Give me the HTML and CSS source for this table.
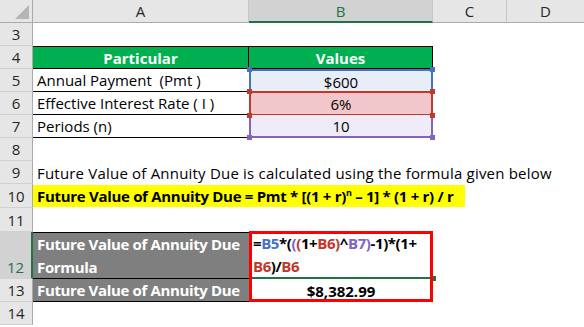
FILE: index.html
```html
<!DOCTYPE html>
<html>
<head>
<meta charset="utf-8">
<link rel="stylesheet" href="styles.css">
</head>
<body>
<div class="sheet">
  <div class="corner"><span class="tri"></span></div>
  <div class="colhead">A</div>
  <div class="colhead sel">B</div>
  <div class="colhead">C</div>
  <div class="colhead last">D</div>

  <div class="rowhead">3</div><div class="cell"></div><div class="cell"></div><div class="cell"></div><div class="cell"></div>

  <div class="rowhead">4</div>
  <div class="cell hdr hdr-a">Particular</div>
  <div class="cell hdr hdr-b">Values</div>
  <div class="cell"></div><div class="cell"></div>

  <div class="rowhead">5</div>
  <div class="cell lbl">Annual Payment&nbsp; (Pmt )</div>
  <div class="cell val ref-blue">$600<i class="sq tl"></i><i class="sq tr"></i></div>
  <div class="cell"></div><div class="cell"></div>

  <div class="rowhead">6</div>
  <div class="cell lbl">Effective Interest Rate ( I )</div>
  <div class="cell val ref-red">6%<i class="sq tl"></i><i class="sq tr"></i><i class="sq bl"></i><i class="sq br"></i></div>
  <div class="cell"></div><div class="cell"></div>

  <div class="rowhead">7</div>
  <div class="cell lbl">Periods (n)</div>
  <div class="cell val ref-purple">10<i class="sq bl"></i><i class="sq br"></i></div>
  <div class="cell"></div><div class="cell"></div>

  <div class="rowhead">8</div><div class="cell"></div><div class="cell"></div><div class="cell"></div><div class="cell"></div>

  <div class="rowhead">9</div>
  <div class="cell span4 text">Future Value of Annuity Due is calculated using the formula given below</div>

  <div class="rowhead">10</div>
  <div class="cell span4"><span class="yellow">Future Value of Annuity Due = Pmt * [(1 + r)<sup>n</sup> – 1] * (1 + r) / r</span></div>

  <div class="rowhead">11</div><div class="cell"></div><div class="cell"></div><div class="cell"></div><div class="cell"></div>

  <div class="rowhead selrow">12</div>
  <div class="cell dark dark-top">Future Value of Annuity Due<br>Formula</div>
  <div class="cell formula"><span class="k">=</span><span class="b">B5</span>*(<span class="p">(</span><span class="r">(</span>1+<span class="r">B6</span><span class="r">)</span>^<span class="p">B7</span><span class="p">)</span>-1)*(1+<br><span class="r">B6</span>)/<span class="r">B6</span><i class="handle"></i></div>
  <div class="cell"></div><div class="cell"></div>

  <div class="rowhead">13</div>
  <div class="cell dark">Future Value of Annuity Due</div>
  <div class="cell result">$8,382.99</div>
  <div class="cell"></div><div class="cell"></div>

  <div class="rowhead">14</div><div class="cell"></div><div class="cell"></div><div class="cell"></div><div class="cell"></div>

  <div class="redbox"></div>
</div>
</body>
</html>
```

FILE: styles.css
```css
html, body {
  margin: 0;
  padding: 0;
  background: #ffffff;
}

.sheet {
  position: relative;
  display: grid;
  grid-template-columns: 33px 216px 184px 74px 77px;
  grid-template-rows: 23px repeat(7, 23px) 24px 24px 47px 23px 23px 23px;
  font-family: "Open Sans", "Lato", sans-serif;
  font-size: 15px;
  color: #000;
  width: 584px;
  height: 327px;
  overflow: hidden;
}

.corner {
  position: relative;
  background: #e6e6e6;
  border-right: 1px solid #ababab;
  border-bottom: 1px solid #ababab;
  box-sizing: border-box;
}
.tri {
  position: absolute;
  right: 3px;
  bottom: 3px;
  width: 0;
  height: 0;
  border-left: 14px solid transparent;
  border-bottom: 14px solid #b5b5b5;
}

.colhead {
  background: #e6e6e6;
  border-right: 1px solid #c6c6c6;
  border-bottom: 1px solid #ababab;
  box-sizing: border-box;
  display: flex;
  align-items: center;
  justify-content: center;
  color: #262626;
  font-size: 15px;
}
.colhead.sel {
  background: #d2d2d2;
  border-bottom: 2px solid #217346;
  color: #217346;
}
.colhead.last { border-right: none; }

.rowhead {
  background: #e6e6e6;
  border-right: 1px solid #ababab;
  border-bottom: 1px solid #d0d0d0;
  box-sizing: border-box;
  display: flex;
  align-items: flex-end;
  justify-content: center;
  padding-bottom: 1px;
  color: #262626;
}
.rowhead.selrow {
  background: #d2d2d2;
  color: #217346;
  border-right: 2px solid #217346;
}

.cell {
  box-sizing: border-box;
  display: flex;
  align-items: center;
  padding: 0 4px;
  white-space: nowrap;
}
.span4 { grid-column: span 4; }

.hdr {
  background: #00b050;
  color: #fff;
  font-weight: bold;
  justify-content: center;
  border-top: 1px solid #000;
  border-bottom: 1px solid #000;
}
.hdr-a { border-right: 1px solid #000; }
.hdr-b { border-right: 1px solid #000; }

.lbl {
  border-bottom: 1px solid #000;
}

.val {
  position: relative;
  justify-content: center;
}
.ref-blue {
  background: #e8eef8;
  border: 2px solid #4472c4;
  border-bottom: none;
}
.ref-red {
  background: #f2c7cb;
  border: 2px solid #c0392b;
  margin-top: -1px;
  margin-bottom: -1px;
}
.ref-purple {
  background: #efecf8;
  border: 2px solid #8462c2;
  border-top: none;
}
.sq {
  position: absolute;
  width: 5px;
  height: 5px;
  z-index: 2;
}
.ref-blue .sq { background: #4472c4; }
.ref-red .sq { background: #c0392b; }
.ref-purple .sq { background: #8462c2; }
.sq.tl { left: -4px; top: -4px; }
.sq.tr { right: -4px; top: -4px; }
.sq.bl { left: -4px; bottom: -4px; }
.sq.br { right: -4px; bottom: -4px; }

.text {
  padding-left: 4px;
  letter-spacing: 0.2px;
}

.yellow {
  display: inline-block;
  background: #ffff00;
  font-weight: bold;
  letter-spacing: -0.3px;
  width: 432px;
  margin-left: -4px;
  padding: 0 0 0 4px;
  line-height: 22px;
  box-sizing: border-box;
}
.yellow sup {
  font-size: 9px;
  line-height: 0;
  vertical-align: 6px;
}

.dark {
  background: #7f7f7f;
  color: #fff;
  font-weight: bold;
  letter-spacing: -0.35px;
  border-bottom: 1px solid #000;
  line-height: 23px;
  white-space: nowrap;
  overflow: hidden;
}
.dark-top { border-top: 1px solid #000; }

.formula {
  position: relative;
  font-weight: bold;
  letter-spacing: -0.4px;
  line-height: 23px;
  display: block;
  padding: 0 4px;
  border-bottom: 2px solid #217346;
}
.formula .b { color: #4472c4; }
.formula .r { color: #c0392b; }
.formula .p { color: #8462c2; }
.handle {
  position: absolute;
  right: -3px;
  bottom: -4px;
  width: 5px;
  height: 5px;
  background: #217346;
}

.result {
  font-weight: bold;
  letter-spacing: 0;
  justify-content: center;
}

.redbox {
  position: absolute;
  left: 249px;
  top: 231px;
  width: 184px;
  height: 71px;
  border: 3px solid #ff0000;
  box-sizing: border-box;
  pointer-events: none;
}
```
